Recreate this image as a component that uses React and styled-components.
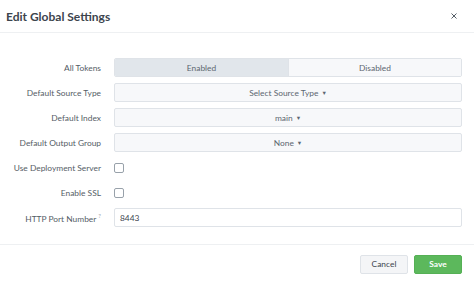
import React from "react";
import styled, { createGlobalStyle } from "styled-components";

const Global = createGlobalStyle`
  html, body { margin: 0; padding: 0; background: #fff; }
  body { font-family: Lato, "Open Sans", sans-serif; color: #333; }
`;

const Modal = styled.div`
  width: 474px;
  height: 283px;
  display: flex;
  flex-direction: column;
  background: #fff;
`;

const Header = styled.div`
  height: 33px;
  box-sizing: border-box;
  border-bottom: 1px solid #eef0f2;
  display: flex;
  align-items: center;
  justify-content: space-between;
  padding: 0 15px 0 6px;
`;

const Title = styled.h2`
  margin: 0;
  font-size: 12px;
  font-weight: 700;
  color: #3c444d;
`;

const Close = styled.button`
  border: 0;
  background: none;
  padding: 0;
  width: 10px;
  height: 10px;
  display: flex;
  align-items: center;
  justify-content: center;
`;

const Body = styled.div`
  flex: 1;
  padding: 25px 12px 0 0;
  display: flex;
  flex-direction: column;
  gap: 6px;
  border-bottom: 1px solid #eef0f2;
`;

const Row = styled.div`
  display: grid;
  grid-template-columns: 101px 1fr;
  column-gap: 13px;
  align-items: center;
  height: 19px;
`;

const Label = styled.div`
  text-align: right;
  font-size: 8.4px;
  color: #555d66;
  white-space: nowrap;
`;

const Help = styled.sup`
  color: #9aa3ad;
  font-size: 6px;
  margin-left: 2px;
`;

const Segmented = styled.div`
  display: grid;
  grid-template-columns: 173px 1fr;
  height: 19px;
  box-sizing: border-box;
  border: 1px solid #dfe3e8;
  border-radius: 2px;
  overflow: hidden;
`;

const Segment = styled.div`
  display: flex;
  align-items: center;
  justify-content: center;
  font-size: 8.4px;
  color: #5c6670;
  background: ${(p) => (p.$active ? "#e1e6eb" : "#f7f8fa")};
  border-left: ${(p) => (p.$first ? "0" : "1px solid #dfe3e8")};
`;

const Select = styled.div`
  height: 19px;
  box-sizing: border-box;
  border: 1px solid #dfe3e8;
  border-radius: 2px;
  background: #f7f8fa;
  display: flex;
  align-items: center;
  justify-content: center;
  gap: 3px;
  font-size: 8.4px;
  color: #5c6670;
`;

const Caret = styled.span`
  font-size: 5.5px;
  color: #5c6670;
`;

const Check = styled.div`
  width: 10px;
  height: 10px;
  box-sizing: border-box;
  border: 1px solid #98a1aa;
  border-radius: 2px;
  background: #fff;
`;

const Input = styled.div`
  height: 19px;
  box-sizing: border-box;
  border: 1px solid #dfe3e8;
  border-radius: 2px;
  background: #fff;
  display: flex;
  align-items: center;
  padding-left: 5px;
  font-size: 8.4px;
  color: #3c444d;
`;

const Footer = styled.div`
  height: 38px;
  display: flex;
  align-items: center;
  justify-content: flex-end;
  gap: 6px;
  padding: 0 12px 0 0;
`;

const Button = styled.button`
  width: 48px;
  height: 19px;
  border-radius: 2px;
  font-family: inherit;
  font-size: 8.4px;
  font-weight: ${(p) => (p.$primary ? 700 : 400)};
  padding: 0;
  color: ${(p) => (p.$primary ? "#fff" : "#3c444d")};
  background: ${(p) => (p.$primary ? "#5cb85c" : "#f4f5f7")};
  border: 1px solid ${(p) => (p.$primary ? "#55b055" : "#dfe3e8")};
`;

export default function App() {
  return (
    <Modal>
      <Global />
      <Header>
        <Title>Edit Global Settings</Title>
        <Close aria-label="close">
          <svg width="6" height="6" viewBox="0 0 6 6">
            <path d="M0.5 0.5L5.5 5.5M5.5 0.5L0.5 5.5" stroke="#555d66" strokeWidth="1" />
          </svg>
        </Close>
      </Header>
      <Body>
        <Row>
          <Label>All Tokens</Label>
          <Segmented>
            <Segment $active $first>Enabled</Segment>
            <Segment>Disabled</Segment>
          </Segmented>
        </Row>
        <Row>
          <Label>Default Source Type</Label>
          <Select>Select Source Type <Caret>▼</Caret></Select>
        </Row>
        <Row>
          <Label>Default Index</Label>
          <Select>main <Caret>▼</Caret></Select>
        </Row>
        <Row>
          <Label>Default Output Group</Label>
          <Select>None <Caret>▼</Caret></Select>
        </Row>
        <Row>
          <Label>Use Deployment Server</Label>
          <Check />
        </Row>
        <Row>
          <Label>Enable SSL</Label>
          <Check />
        </Row>
        <Row>
          <Label>HTTP Port Number<Help>?</Help></Label>
          <Input>8443</Input>
        </Row>
      </Body>
      <Footer>
        <Button>Cancel</Button>
        <Button $primary>Save</Button>
      </Footer>
    </Modal>
  );
}
